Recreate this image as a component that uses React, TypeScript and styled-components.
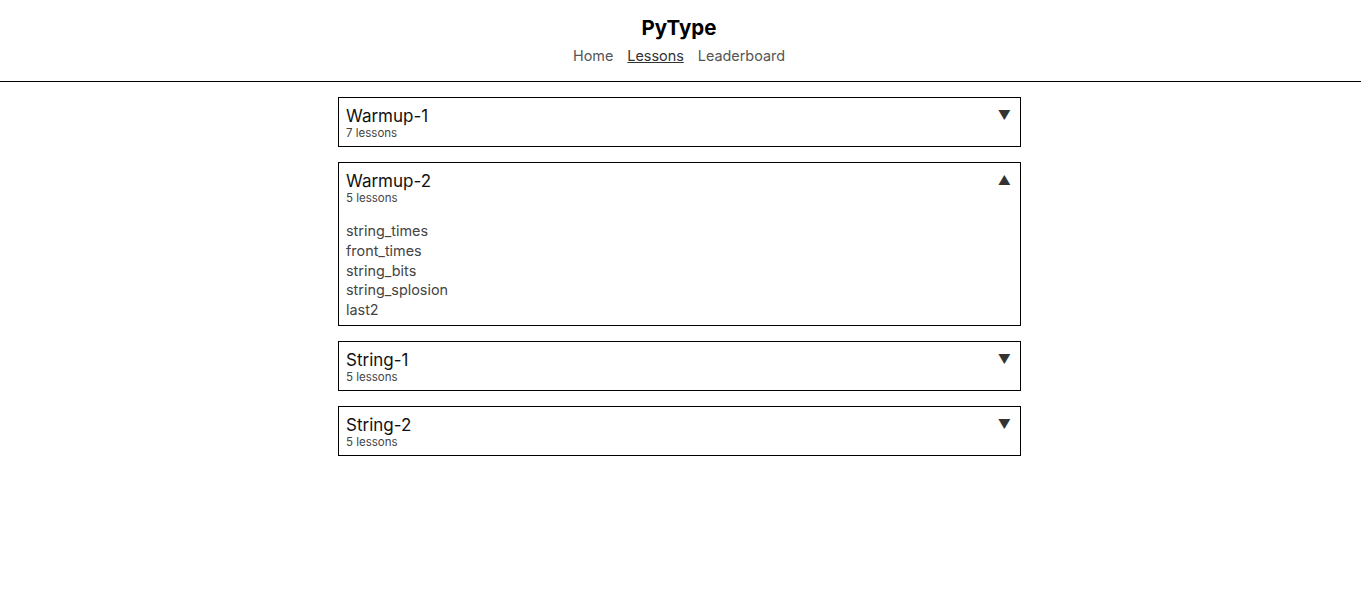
import React, { useState } from "react";
import styled, { createGlobalStyle } from "styled-components";

const GlobalStyle = createGlobalStyle`
  html, body { margin: 0; padding: 0; background: #fff; }
  body { font-family: Inter, "Noto Sans", sans-serif; color: #111; }
  * { box-sizing: border-box; }
`;

const Page = styled.div`
  width: 100%;
`;

const Header = styled.header`
  display: flex;
  flex-direction: column;
  align-items: center;
  padding: 14px 3px 0 0;
  height: 82px;
  border-bottom: 1px solid #000;
`;

const Title = styled.h1`
  margin: 0;
  font-size: 20.5px;
  line-height: 28px;
  font-weight: 700;
  color: #000;
`;

const Nav = styled.nav`
  display: flex;
  gap: 14px;
  margin-top: 4px;
`;

const NavLink = styled.a<{ $active?: boolean }>`
  font-size: 14.4px;
  line-height: 20px;
  color: ${(p) => (p.$active ? "#333" : "#555")};
  text-decoration: ${(p) => (p.$active ? "underline" : "none")};
  cursor: pointer;
`;

const Main = styled.main`
  width: 683px;
  margin: 15px 0 0 calc(50% - 342.5px);
  display: flex;
  flex-direction: column;
  gap: 15px;
`;

const Card = styled.section`
  border: 1px solid #000;
  padding: 8px 9px 6px 7px;
`;

const CardHead = styled.div`
  display: flex;
  justify-content: space-between;
  align-items: flex-start;
  cursor: pointer;
`;

const CardTitle = styled.div`
  font-size: 17px;
  line-height: 20px;
  color: #111;
`;

const CardSub = styled.div`
  font-size: 11.5px;
  line-height: 14px;
  color: #444;
`;

const Arrow = styled.span`
  font-size: 13px;
  line-height: 16px;
  color: #333;
  margin-top: 1px;
`;

const LessonList = styled.ul`
  list-style: none;
  margin: 16px 0 -1px;
  padding: 0;
`;

const Lesson = styled.li`
  font-size: 14.4px;
  line-height: 19.75px;
  color: #444;
`;

type Group = { name: string; lessons: string[]; count: number };

const groups: Group[] = [
  { name: "Warmup-1", count: 7, lessons: [] },
  {
    name: "Warmup-2",
    count: 5,
    lessons: ["string_times", "front_times", "string_bits", "string_splosion", "last2"],
  },
  { name: "String-1", count: 5, lessons: [] },
  { name: "String-2", count: 5, lessons: [] },
];

export default function App() {
  const [open, setOpen] = useState<string | null>("Warmup-2");
  return (
    <Page>
      <GlobalStyle />
      <Header>
        <Title>PyType</Title>
        <Nav>
          <NavLink>Home</NavLink>
          <NavLink $active>Lessons</NavLink>
          <NavLink>Leaderboard</NavLink>
        </Nav>
      </Header>
      <Main>
        {groups.map((g) => {
          const isOpen = open === g.name;
          return (
            <Card key={g.name}>
              <CardHead onClick={() => setOpen(isOpen ? null : g.name)}>
                <div>
                  <CardTitle>{g.name}</CardTitle>
                  <CardSub>{g.count} lessons</CardSub>
                </div>
                <Arrow>{isOpen ? "▲" : "▼"}</Arrow>
              </CardHead>
              {isOpen && (
                <LessonList>
                  {g.lessons.map((l) => (
                    <Lesson key={l}>{l}</Lesson>
                  ))}
                </LessonList>
              )}
            </Card>
          );
        })}
      </Main>
    </Page>
  );
}
